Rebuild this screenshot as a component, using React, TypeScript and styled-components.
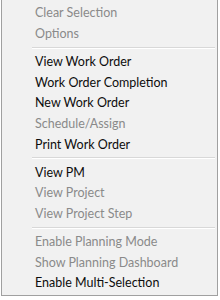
import styled, { createGlobalStyle } from "styled-components";

const GlobalStyle = createGlobalStyle`
  html, body {
    margin: 0;
    padding: 0;
    background: #ffffff;
  }
  body {
    font-family: Lato, "Open Sans", sans-serif;
  }
`;

type Entry = { label: string; disabled?: boolean } | "sep";

const entries: Entry[] = [
  { label: "Clear Selection", disabled: true },
  { label: "Options", disabled: true },
  "sep",
  { label: "View Work Order" },
  { label: "Work Order Completion" },
  { label: "New Work Order" },
  { label: "Schedule/Assign", disabled: true },
  { label: "Print Work Order" },
  "sep",
  { label: "View PM" },
  { label: "View Project", disabled: true },
  { label: "View Project Step", disabled: true },
  "sep",
  { label: "Enable Planning Mode", disabled: true },
  { label: "Show Planning Dashboard", disabled: true },
  { label: "Enable Multi-Selection" },
];

const App: React.FC = () => {
  return (
    <>
      <GlobalStyle />
      <Page>
        <Menu>
          {entries.map((e, i) =>
            e === "sep" ? (
              <Separator key={i} />
            ) : (
              <Item key={i} $disabled={e.disabled}>
                {e.label}
              </Item>
            )
          )}
        </Menu>
      </Page>
    </>
  );
};

export default App;

const Page = styled.div`
  width: 220px;
  height: 300px;
  display: flex;
  align-items: flex-start;
  padding-left: 1px;
  box-sizing: border-box;
  border-left: 1px solid #e6ebf2;
  margin-left: -1px;
`;

const Menu = styled.div`
  width: 217px;
  box-sizing: border-box;
  background: #f1f1f1;
  border: 1px solid #a0a0a0;
  border-top: none;
  padding: 2.5px 2px 2px 2px;
  display: flex;
  flex-direction: column;
`;

const Item = styled.div<{ $disabled?: boolean }>`
  height: 20.75px;
  display: flex;
  align-items: center;
  padding-left: 31px;
  font-size: 12.5px;
  color: ${(p) => (p.$disabled ? "#8a8a8a" : "#0d0d0d")};
  white-space: nowrap;
`;

const Separator = styled.div`
  height: 7px;
  display: flex;
  align-items: center;
  padding-left: 28px;

  &::after {
    content: "";
    flex: 1;
    height: 1px;
    background: #d8d8d8;
    border-bottom: 1px solid #ffffff;
  }
`;
